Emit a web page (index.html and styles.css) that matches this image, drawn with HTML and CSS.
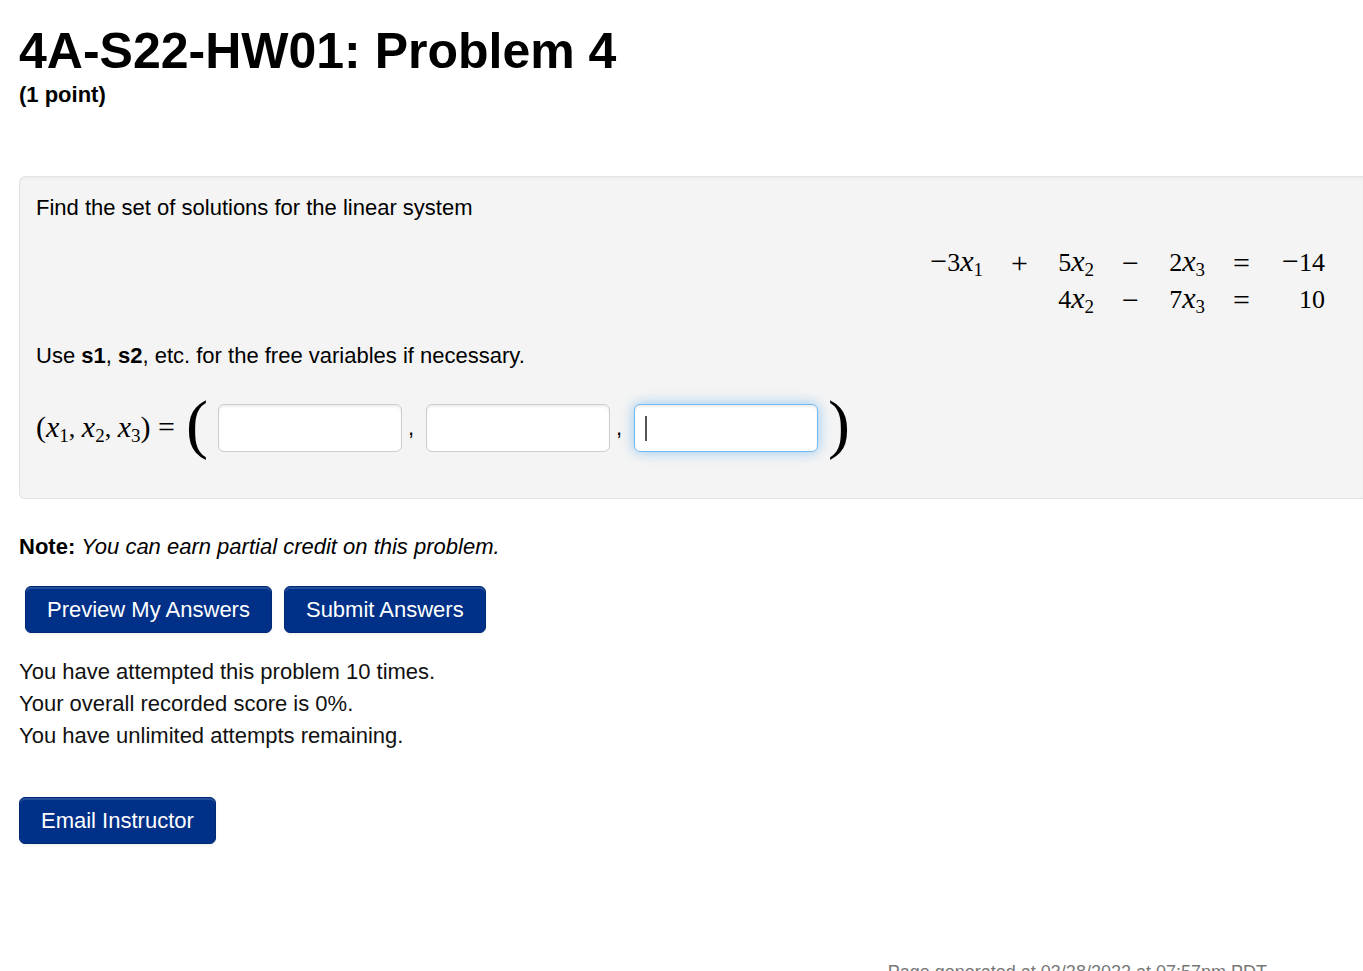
FILE: index.html
```
<!DOCTYPE html>
<html lang="en">

<head>
    <meta charset="UTF-8">
    <meta name="viewport" content="width=device-width, initial-scale=1.0">
    <title>4A-S22-HW01: Problem 4</title>
    <link rel="stylesheet" href="styles.css">
</head>

<body>
    <main>
        <h1>4A-S22-HW01: Problem 4</h1>
        <p class="points">(1 point)</p>

        <form>
            <!-- Problem statement -->
            <div class="problem">
                <p>Find the set of solutions for the linear system</p>

                <table class="system math">
                    <tr>
                        <td class="term"><span class="sign">−</span>3<i>x</i><sub>1</sub></td>
                        <td class="op">+</td>
                        <td class="term">5<i>x</i><sub>2</sub></td>
                        <td class="op">−</td>
                        <td class="term">2<i>x</i><sub>3</sub></td>
                        <td class="op">=</td>
                        <td class="result"><span class="sign">−</span>14</td>
                    </tr>
                    <tr>
                        <td class="term"></td>
                        <td class="op"></td>
                        <td class="term">4<i>x</i><sub>2</sub></td>
                        <td class="op">−</td>
                        <td class="term">7<i>x</i><sub>3</sub></td>
                        <td class="op">=</td>
                        <td class="result">10</td>
                    </tr>
                </table>

                <p>Use <b>s1</b>, <b>s2</b>, etc. for the free variables if necessary.</p>

                <div class="answer">
                    <span class="math tuple"><span class="sign">(</span><i>x</i><sub>1</sub>, <i>x</i><sub>2</sub>, <i>x</i><sub>3</sub><span class="sign">) =</span></span>
                    <span class="math paren">(</span>
                    <input type="text" class="blank" aria-label="answer 1">
                    <span class="comma">,</span>
                    <input type="text" class="blank" aria-label="answer 2">
                    <span class="comma">,</span>
                    <span class="field">
                        <input type="text" class="blank active" aria-label="answer 3">
                        <span class="caret"></span>
                    </span>
                    <span class="math paren close">)</span>
                </div>
            </div>

            <p class="note"><b>Note:</b> <i>You can earn partial credit on this problem.</i></p>

            <div class="actions">
                <button type="button" class="btn">Preview My Answers</button>
                <button type="button" class="btn">Submit Answers</button>
            </div>
        </form>

        <p class="attempts">
            You have attempted this problem 10 times.<br>
            Your overall recorded score is 0%.<br>
            You have unlimited attempts remaining.
        </p>

        <button type="button" class="btn">Email Instructor</button>
    </main>

    <footer>Page generated at 03/28/2022 at 07:57pm PDT</footer>
</body>

</html>
```

FILE: styles.css
```
* {
    margin: 0;
    padding: 0;
    box-sizing: border-box;
}

body {
    font-family: "Liberation Sans", Arial, sans-serif;
    font-size: 22px;
    line-height: 32px;
    color: #000;
    background: #fff;
    height: 100vh;
    overflow: hidden;
}

main {
    padding: 23px 0 0 19px;
}

h1 {
    font-size: 50px;
    line-height: 56px;
    font-weight: bold;
}

.points {
    font-weight: bold;
}

/* Problem box, runs off the right side of the window */
.problem {
    margin-top: 65px;
    padding: 15px 38px 38px 16px;
    background: #f4f4f4;
    border: 1px solid #e3e3e3;
    border-right: none;
    border-radius: 6px 0 0 6px;
    box-shadow: inset 0 2px 2px rgba(0, 0, 0, 0.03);
}

/* Math */
.math {
    font-family: "Liberation Serif", "Times New Roman", serif;
    font-size: 26px;
}

.math i,
.math .sign {
    font-size: 30px;
    line-height: 1;
}

.math sub {
    font-size: 19px;
    line-height: 1;
    vertical-align: -5px;
}

.system {
    margin: 20px 0 22px auto;
    border-collapse: collapse;
    line-height: 37px;
    text-align: right;
}

.system td {
    height: 37px;
}

.system .term {
    width: 66px;
}

.system .op {
    width: 45px;
    font-size: 30px;
}

.system .result {
    width: 75px;
}

/* Answer blanks */
.answer {
    display: flex;
    align-items: center;
    height: 64px;
    margin-top: 24px;
}

.tuple {
    width: 150px;
    white-space: nowrap;
}

.paren {
    width: 32px;
    font-size: 66px;
    line-height: 56px;
    padding-bottom: 8px;
}

.paren.close {
    text-align: right;
}

.comma {
    width: 24px;
    padding-left: 6px;
}

.blank {
    width: 184px;
    height: 48px;
    padding: 6px 10px;
    font: inherit;
    color: #555;
    background: #fff;
    border: 1px solid #ccc;
    border-radius: 6px;
    outline: none;
    box-shadow: inset 0 2px 2px rgba(0, 0, 0, 0.07);
}

.blank.active {
    border-color: #74b9ef;
    box-shadow: inset 0 2px 2px rgba(0, 0, 0, 0.07), 0 0 13px rgba(82, 168, 236, 0.6);
}

.field {
    position: relative;
    display: flex;
}

.caret {
    position: absolute;
    left: 11px;
    top: 12px;
    width: 2px;
    height: 25px;
    background: #555;
}

.note {
    margin-top: 32px;
}

/* Buttons */
.actions {
    display: flex;
    gap: 12px;
    margin: 23px 0 23px 6px;
}

.btn {
    height: 47px;
    padding: 0 21px;
    font-family: inherit;
    font-size: 22px;
    color: #fff;
    background: #003087;
    border: 1px solid #002a77;
    border-radius: 6px;
    box-shadow: inset 0 2px 0 rgba(255, 255, 255, 0.15), 0 2px 3px rgba(0, 0, 0, 0.05);
    cursor: pointer;
}

.attempts {
    margin-bottom: 45px;
    color: #111;
}

footer {
    margin-top: 112px;
    padding-right: 96px;
    font-size: 18px;
    color: #777;
    text-align: right;
}
```
